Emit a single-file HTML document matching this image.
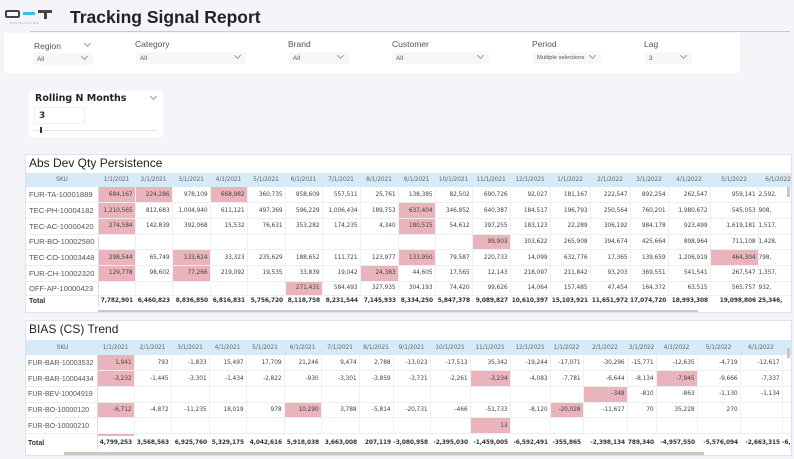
<!DOCTYPE html>
<html><head><meta charset="utf-8">
<style>
*{margin:0;padding:0;box-sizing:border-box}
body{width:794px;height:459px;overflow:hidden;background:#f5f5f9;font-family:"Liberation Sans",sans-serif;position:relative;color:#333}
.abs{position:absolute}
.title{left:70px;top:7px;font-size:17.5px;font-weight:bold;color:#222}
.hline{left:30px;top:31px;width:760px;height:1px;background:#b7cde0}
.filt{left:4px;top:33px;height:40px;background:#fff;width:736px}
.lbl{font-size:8.5px;color:#555}
.dd{height:12px;background:#f7f7f7;font-size:6.3px;color:#555;padding:3px 0 0 4px}
.chev{position:absolute;right:6px;top:1px;width:5px;height:5px;border-right:1px solid #999;border-bottom:1px solid #999;transform:rotate(45deg)}
.card{background:#fff;border:1px solid #dbe3ec}
table{border-collapse:collapse;table-layout:fixed;font-family:"DejaVu Sans",sans-serif}
td{font-size:5.9px;letter-spacing:-0.1px;text-align:right;padding-right:2px;white-space:nowrap;overflow:hidden;color:#444;border-bottom:1px solid #eee;border-right:1px solid #f0f0f0}
td.s{text-align:left;padding-left:3px;font-family:"Liberation Sans",sans-serif;font-size:7.6px;letter-spacing:0;color:#555;border-right:1px solid #d8dde3}
.t2 td.s{font-size:7.1px;padding-left:2px}
tr.h td{background:#d6eaf7;color:#666;font-size:5.9px;text-align:center;padding:0;border:none}
tr.h td.s{text-align:center;font-size:5.9px;font-family:"DejaVu Sans",sans-serif}
td.p{background:#ebb4bc}
tr.t td{font-weight:bold;color:#333;border:none}
tr.t td.s{font-weight:bold;font-size:7px;color:#333;border-right:1px solid #d8dde3}
.ttl{font-size:12px;color:#222}
.sb{background:#c8c8c8;height:3px}
</style></head><body>
<div class="abs" style="left:5px;top:10px;width:15px;height:8px;border:2.5px solid #444;border-radius:2px"></div>
<div class="abs" style="left:23px;top:12px;width:12px;height:3px;background:#2ec4e6"></div>
<div class="abs" style="left:38px;top:10px;width:14px;height:2.5px;background:#444"></div>
<div class="abs" style="left:44px;top:10px;width:2.5px;height:9px;background:#444"></div>
<div class="abs" style="left:10px;top:21px;font-size:3px;color:#999;letter-spacing:1px">CONSULTING</div>
<div class="abs title">Tracking Signal Report</div>
<div class="abs hline"></div>
<div class="abs filt"></div>
<div class="abs lbl" style="left:34px;top:41px">Region</div><div class="abs chev" style="left:85px;top:41px"></div>
<div class="abs dd" style="left:33px;top:53px;width:60px">All<span class="chev"></span></div>
<div class="abs lbl" style="left:135px;top:39px">Category</div>
<div class="abs dd" style="left:136px;top:52px;width:110px">All<span class="chev"></span></div>
<div class="abs lbl" style="left:288px;top:39px">Brand</div>
<div class="abs dd" style="left:289px;top:52px;width:60px">All<span class="chev"></span></div>
<div class="abs lbl" style="left:392px;top:39px">Customer</div>
<div class="abs dd" style="left:392px;top:52px;width:97px">All<span class="chev"></span></div>
<div class="abs lbl" style="left:532px;top:39px">Period</div>
<div class="abs dd" style="left:533px;top:52px;width:68px;font-size:5.8px">Multiple selections<span class="chev"></span></div>
<div class="abs lbl" style="left:644px;top:39px">Lag</div>
<div class="abs dd" style="left:645px;top:52px;width:47px">3<span class="chev"></span></div>
<div class="abs" style="left:29px;top:91px;width:134px;height:46px;background:#fff"></div>
<div class="abs" style="left:35px;top:93px;font-size:9.5px;font-weight:bold;color:#222;font-family:'DejaVu Sans',sans-serif">Rolling N Months</div>
<div class="abs chev" style="left:151px;top:94px"></div>
<div class="abs" style="left:34px;top:107px;width:51px;height:17px;border:1px solid #f0f0f0;font-size:9px;font-weight:bold;padding:3px 0 0 4px;font-family:'DejaVu Sans',sans-serif">3</div>
<div class="abs" style="left:34px;top:130px;width:123px;height:1px;background:#e6e6e6"></div>
<div class="abs" style="left:40px;top:127px;width:1.5px;height:6px;background:#333"></div>

<div class="abs card" style="left:25px;top:154px;width:767px;height:159px;overflow:hidden">
<div class="ttl" style="position:absolute;left:3px;top:1px">Abs Dev Qty Persistence</div>
<table style="position:absolute;left:0;top:18px;width:772px">
<colgroup><col style="width:72px"><col style="width:37px"><col style="width:37px"><col style="width:38px"><col style="width:37px"><col style="width:38px"><col style="width:37px"><col style="width:38px"><col style="width:38px"><col style="width:37px"><col style="width:37px"><col style="width:38px"><col style="width:40px"><col style="width:40px"><col style="width:40px"><col style="width:38px"><col style="width:42px"><col style="width:48px"><col style="width:40px"></colgroup>
<tr class="h" style="height:14px"><td class="s">SKU</td><td>1/1/2021</td><td>2/1/2021</td><td>3/1/2021</td><td>4/1/2021</td><td>5/1/2021</td><td>6/1/2021</td><td>7/1/2021</td><td>8/1/2021</td><td>9/1/2021</td><td>10/1/2021</td><td>11/1/2021</td><td>12/1/2021</td><td>1/1/2022</td><td>2/1/2022</td><td>3/1/2022</td><td>4/1/2022</td><td>5/1/2022</td><td>6/1/2022</td></tr>
<tr style="height:15.7px"><td class="s">FUR-TA-10001889</td><td class="p">684,167</td><td class="p">224,286</td><td>978,109</td><td class="p">668,982</td><td>360,735</td><td>858,609</td><td>557,511</td><td>25,761</td><td>138,385</td><td>82,502</td><td>690,726</td><td>92,027</td><td>181,167</td><td>222,547</td><td>892,254</td><td>262,547</td><td>959,141</td><td style="text-align:left">2,592,</td></tr>
<tr style="height:15.7px"><td class="s">TEC-PH-10004182</td><td class="p">1,210,565</td><td>812,683</td><td>1,004,940</td><td>611,121</td><td>497,369</td><td>596,229</td><td>1,006,434</td><td>189,753</td><td class="p">637,404</td><td>346,852</td><td>640,387</td><td>184,517</td><td>196,793</td><td>250,564</td><td>760,201</td><td>1,980,672</td><td>545,053</td><td style="text-align:left">908,</td></tr>
<tr style="height:15.7px"><td class="s">TEC-AC-10000420</td><td class="p">274,584</td><td>142,839</td><td>392,068</td><td>15,532</td><td>76,631</td><td>353,282</td><td>174,235</td><td>4,340</td><td class="p">180,515</td><td>54,612</td><td>397,255</td><td>183,123</td><td>22,289</td><td>306,192</td><td>984,178</td><td>923,499</td><td>1,619,181</td><td style="text-align:left">1,517,</td></tr>
<tr style="height:15.7px"><td class="s">FUR-BO-10002580</td><td></td><td></td><td></td><td></td><td></td><td></td><td></td><td></td><td></td><td></td><td class="p">99,903</td><td>303,622</td><td>265,908</td><td>394,674</td><td>425,664</td><td>898,964</td><td>711,108</td><td style="text-align:left">1,428,</td></tr>
<tr style="height:15.7px"><td class="s">TEC-CO-10003448</td><td class="p">298,544</td><td>65,749</td><td class="p">133,624</td><td>33,323</td><td>235,629</td><td>188,652</td><td>111,721</td><td>123,977</td><td class="p">133,950</td><td>79,587</td><td>220,733</td><td>14,099</td><td>632,776</td><td>17,365</td><td>139,659</td><td>1,206,919</td><td class="p">464,304</td><td style="text-align:left">798,</td></tr>
<tr style="height:15.7px"><td class="s">FUR-CH-10002320</td><td class="p">129,778</td><td>98,602</td><td class="p">77,266</td><td>219,092</td><td>19,535</td><td>33,839</td><td>19,042</td><td class="p">24,383</td><td>44,605</td><td>17,565</td><td>12,143</td><td>218,097</td><td>211,842</td><td>93,203</td><td>369,551</td><td>541,541</td><td>267,547</td><td style="text-align:left">1,357,</td></tr>
<tr style="height:14px"><td class="s">OFF-AP-10000423</td><td></td><td></td><td></td><td></td><td></td><td class="p">271,431</td><td>584,493</td><td>327,935</td><td>304,193</td><td>74,420</td><td>99,626</td><td>14,064</td><td>157,485</td><td>47,454</td><td>164,372</td><td>63,515</td><td>565,757</td><td style="text-align:left">932,</td></tr>
<tr class="t" style="height:12px"><td class="s">Total</td><td>7,782,901</td><td>6,460,823</td><td>8,836,850</td><td>6,816,831</td><td>5,756,720</td><td>8,118,758</td><td>8,231,544</td><td>7,145,933</td><td>8,334,250</td><td>5,847,378</td><td>9,089,827</td><td>10,610,397</td><td>15,103,921</td><td>11,651,972</td><td>17,074,720</td><td>18,993,308</td><td>19,098,806</td><td style="text-align:left">25,346,</td></tr>
</table>
<div class="abs sb" style="left:72px;top:155px;width:600px"></div>
<div class="abs" style="left:761px;top:32px;width:3px;height:10px;background:#c8c8c8"></div>
</div>

<div class="abs card" style="left:25px;top:320px;width:767px;height:136px;overflow:hidden">
<div class="ttl" style="position:absolute;left:3px;top:1px">BIAS (CS) Trend</div>
<table class="t2" style="position:absolute;left:0;top:19px;width:776px">
<colgroup><col style="width:71px"><col style="width:37px"><col style="width:37px"><col style="width:38px"><col style="width:37px"><col style="width:38px"><col style="width:37px"><col style="width:38px"><col style="width:34px"><col style="width:37px"><col style="width:40px"><col style="width:40px"><col style="width:40px"><col style="width:33px"><col style="width:44px"><col style="width:29px"><col style="width:41px"><col style="width:43px"><col style="width:42px"><col style="width:20px"></colgroup>
<tr class="h" style="height:15px"><td class="s">SKU</td><td>1/1/2021</td><td>2/1/2021</td><td>3/1/2021</td><td>4/1/2021</td><td>5/1/2021</td><td>6/1/2021</td><td>7/1/2021</td><td>8/1/2021</td><td>9/1/2021</td><td>10/1/2021</td><td>11/1/2021</td><td>12/1/2021</td><td>1/1/2022</td><td>2/1/2022</td><td>3/1/2022</td><td>4/1/2022</td><td>5/1/2022</td><td>6/1/2022</td><td></td></tr>
<tr style="height:15.7px"><td class="s">FUR-BAR-10003532</td><td class="p">1,941</td><td>793</td><td>-1,833</td><td>15,497</td><td>17,709</td><td>21,246</td><td>9,474</td><td>2,788</td><td>-13,023</td><td>-17,513</td><td>35,342</td><td>-19,244</td><td>-17,071</td><td>-30,296</td><td>-15,771</td><td>-12,635</td><td>-4,719</td><td>-12,617</td><td></td></tr>
<tr style="height:15.7px"><td class="s">FUR-BAR-10004434</td><td class="p">-3,232</td><td>-1,445</td><td>-3,301</td><td>-1,434</td><td>-2,822</td><td>-930</td><td>-3,301</td><td>-3,859</td><td>-3,731</td><td>-2,261</td><td class="p">-3,234</td><td>-4,083</td><td>-7,781</td><td>-6,644</td><td>-8,134</td><td class="p">-7,945</td><td>-9,666</td><td>-7,337</td><td></td></tr>
<tr style="height:15.7px"><td class="s">FUR-BEV-10004919</td><td></td><td></td><td></td><td></td><td></td><td></td><td></td><td></td><td></td><td></td><td></td><td></td><td></td><td class="p">-348</td><td>-810</td><td>-863</td><td>-1,130</td><td>-1,134</td><td></td></tr>
<tr style="height:15.7px"><td class="s">FUR-BO-10000120</td><td class="p">-6,712</td><td>-4,872</td><td>-11,235</td><td>18,019</td><td>978</td><td class="p">10,290</td><td>3,788</td><td>-5,814</td><td>-20,731</td><td>-466</td><td>-51,733</td><td>-8,120</td><td class="p">-20,028</td><td>-11,617</td><td>70</td><td>35,228</td><td>270</td><td></td><td></td></tr>
<tr style="height:15.7px"><td class="s">FUR-BO-10000210</td><td></td><td></td><td></td><td></td><td></td><td></td><td></td><td></td><td></td><td></td><td class="p">13</td><td></td><td></td><td></td><td></td><td></td><td></td><td></td><td></td></tr>
<tr style="height:3px"><td class="s" style="border:none;border-right:1px solid #d8dde3"></td><td class="p" style="border:none"></td><td colspan="18" style="border:none"></td></tr>
<tr class="t" style="height:14px"><td class="s">Total</td><td>4,799,253</td><td>3,568,563</td><td>6,925,760</td><td>5,329,175</td><td>4,042,616</td><td>5,918,038</td><td>3,663,008</td><td>207,119</td><td>-3,080,958</td><td>-2,395,030</td><td>-1,459,005</td><td>-6,592,491</td><td>-355,865</td><td>-2,398,134</td><td>789,340</td><td>-4,957,550</td><td>-5,576,094</td><td>-2,663,315</td><td style="text-align:left">-6,</td></tr>
</table>
<div class="abs sb" style="left:38px;top:131px;width:640px"></div>
<div class="abs" style="left:761px;top:27px;width:3px;height:10px;background:#c8c8c8"></div>
</div>
</body></html>
